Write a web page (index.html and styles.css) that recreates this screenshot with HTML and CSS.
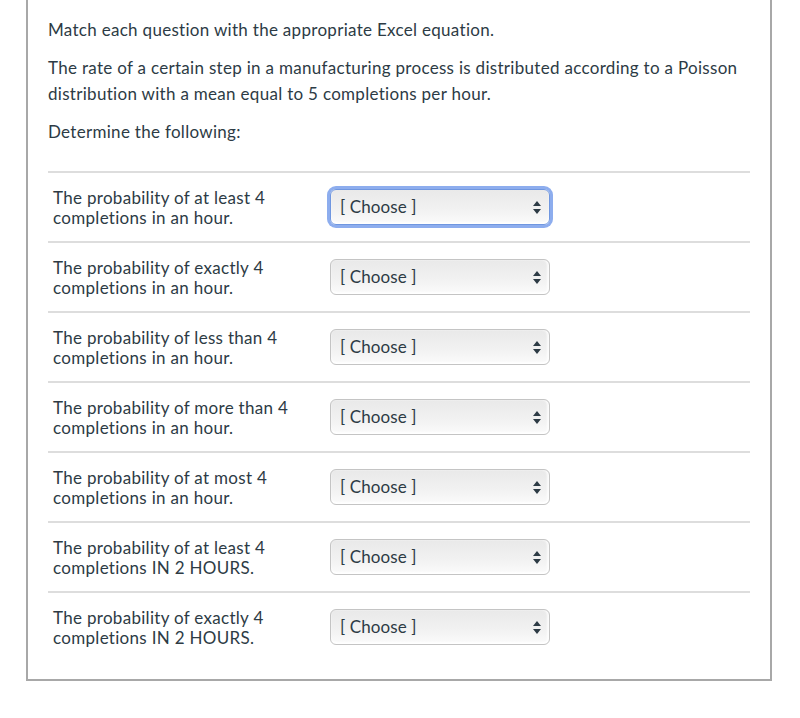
FILE: index.html
```html
<!DOCTYPE html>
<html>
<head>
<meta charset="utf-8">
<link rel="stylesheet" href="styles.css">
</head>
<body>
<div class="frame">
  <p class="para">Match each question with the appropriate Excel equation.</p>
  <p class="para">The rate of a certain step in a manufacturing process is distributed according to a Poisson distribution with a mean equal to 5 completions per hour.</p>
  <p class="para">Determine the following:</p>
  <div class="rows">
    <div class="row">
      <div class="q">The probability of at least 4 completions in an hour.</div>
      <div class="sel focused"><span class="sel-text">[ Choose ]</span><svg class="arrows" width="8" height="13" viewBox="0 0 8 13"><path d="M4 0 L8 5 L0 5 Z M0 8 L8 8 L4 13 Z" fill="#2d3b45"/></svg></div>
    </div>
    <div class="row">
      <div class="q">The probability of exactly 4 completions in an hour.</div>
      <div class="sel"><span class="sel-text">[ Choose ]</span><svg class="arrows" width="8" height="13" viewBox="0 0 8 13"><path d="M4 0 L8 5 L0 5 Z M0 8 L8 8 L4 13 Z" fill="#2d3b45"/></svg></div>
    </div>
    <div class="row">
      <div class="q">The probability of less than 4 completions in an hour.</div>
      <div class="sel"><span class="sel-text">[ Choose ]</span><svg class="arrows" width="8" height="13" viewBox="0 0 8 13"><path d="M4 0 L8 5 L0 5 Z M0 8 L8 8 L4 13 Z" fill="#2d3b45"/></svg></div>
    </div>
    <div class="row">
      <div class="q">The probability of more than 4 completions in an hour.</div>
      <div class="sel"><span class="sel-text">[ Choose ]</span><svg class="arrows" width="8" height="13" viewBox="0 0 8 13"><path d="M4 0 L8 5 L0 5 Z M0 8 L8 8 L4 13 Z" fill="#2d3b45"/></svg></div>
    </div>
    <div class="row">
      <div class="q">The probability of at most 4 completions in an hour.</div>
      <div class="sel"><span class="sel-text">[ Choose ]</span><svg class="arrows" width="8" height="13" viewBox="0 0 8 13"><path d="M4 0 L8 5 L0 5 Z M0 8 L8 8 L4 13 Z" fill="#2d3b45"/></svg></div>
    </div>
    <div class="row">
      <div class="q">The probability of at least 4 completions IN 2 HOURS.</div>
      <div class="sel"><span class="sel-text">[ Choose ]</span><svg class="arrows" width="8" height="13" viewBox="0 0 8 13"><path d="M4 0 L8 5 L0 5 Z M0 8 L8 8 L4 13 Z" fill="#2d3b45"/></svg></div>
    </div>
    <div class="row">
      <div class="q">The probability of exactly 4 completions IN 2 HOURS.</div>
      <div class="sel"><span class="sel-text">[ Choose ]</span><svg class="arrows" width="8" height="13" viewBox="0 0 8 13"><path d="M4 0 L8 5 L0 5 Z M0 8 L8 8 L4 13 Z" fill="#2d3b45"/></svg></div>
    </div>
  </div>
</div>
</body>
</html>
```

FILE: styles.css
```css
html, body {
  margin: 0;
  padding: 0;
  background: #fff;
}
body {
  font-family: Lato, "Open Sans", sans-serif;
  color: #2d3b45;
  font-size: 17px;
  letter-spacing: 0.3px;
}
.frame {
  margin-left: 26px;
  width: 746px;
  box-sizing: border-box;
  border-left: 2px solid #a8a8a8;
  border-right: 2px solid #a8a8a8;
  border-bottom: 2px solid #a8a8a8;
  padding: 17px 20px 18px 20px;
}
.para {
  margin: 0 0 12px 0;
  line-height: 26px;
}
.rows {
  margin-top: 26px;
}
.row {
  border-top: 2px solid #dddddd;
  height: 68px;
  display: flex;
  align-items: center;
  padding-left: 5px;
}
.q {
  width: 270px;
  line-height: 20px;
  margin-right: 7px;
  padding-top: 1px;
}
.sel {
  position: relative;
  width: 220px;
  height: 36px;
  box-sizing: border-box;
  border: 1px solid #c4c4c4;
  border-radius: 6px;
  background: linear-gradient(to bottom, #e9e9e9 0%, #f1f1f1 55%, #fbfbfb 100%);
  box-shadow: inset 0 -2px 2px rgba(255,255,255,0.9), inset -2px 0 2px rgba(255,255,255,0.8);
  display: flex;
  align-items: center;
  padding-left: 9px;
  letter-spacing: 0.1px;
}
.sel.focused {
  border-color: #7097e0;
  box-shadow: 0 0 0 3px #8dadee, inset 0 -2px 2px rgba(255,255,255,0.9);
}
.sel-text {
  line-height: 20px;
}
.arrows {
  position: absolute;
  right: 8px;
  top: 11px;
}
```
